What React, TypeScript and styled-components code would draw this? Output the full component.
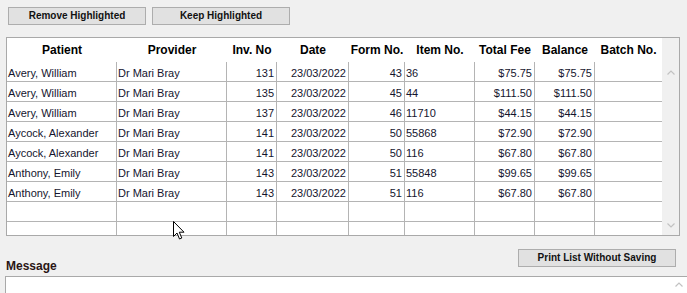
import React from 'react';
import styled, { createGlobalStyle } from 'styled-components';

const GlobalStyle = createGlobalStyle`
  html, body {
    margin: 0;
    padding: 0;
    background: #f0f0f0;
    overflow: hidden;
  }
  body {
    font-family: "Liberation Sans", Arial, sans-serif;
    color: #111;
  }
`;

type Align = 'left' | 'right';

const columns: { title: string; width: number; align: Align }[] = [
  { title: 'Patient', width: 110, align: 'left' },
  { title: 'Provider', width: 110, align: 'left' },
  { title: 'Inv. No', width: 50, align: 'right' },
  { title: 'Date', width: 72, align: 'right' },
  { title: 'Form No.', width: 56, align: 'right' },
  { title: 'Item No.', width: 70, align: 'left' },
  { title: 'Total Fee', width: 60, align: 'right' },
  { title: 'Balance', width: 60, align: 'right' },
  { title: 'Batch No.', width: 67, align: 'left' },
];

const rows: string[][] = [
  ['Avery, William', 'Dr Mari Bray', '131', '23/03/2022', '43', '36', '$75.75', '$75.75', ''],
  ['Avery, William', 'Dr Mari Bray', '135', '23/03/2022', '45', '44', '$111.50', '$111.50', ''],
  ['Avery, William', 'Dr Mari Bray', '137', '23/03/2022', '46', '11710', '$44.15', '$44.15', ''],
  ['Aycock, Alexander', 'Dr Mari Bray', '141', '23/03/2022', '50', '55868', '$72.90', '$72.90', ''],
  ['Aycock, Alexander', 'Dr Mari Bray', '141', '23/03/2022', '50', '116', '$67.80', '$67.80', ''],
  ['Anthony, Emily', 'Dr Mari Bray', '143', '23/03/2022', '51', '55848', '$99.65', '$99.65', ''],
  ['Anthony, Emily', 'Dr Mari Bray', '143', '23/03/2022', '51', '116', '$67.80', '$67.80', ''],
  ['', '', '', '', '', '', '', '', ''],
  ['', '', '', '', '', '', '', '', ''],
  ['', '', '', '', '', '', '', '', ''],
];

const gridTemplate = columns.map((c) => `${c.width}px`).join(' ');

const Page = styled.div`
  position: relative;
  width: 687px;
  height: 293px;
  overflow: hidden;
`;

const Toolbar = styled.div`
  display: flex;
  gap: 6px;
  padding: 7px 0 0 8px;
`;

const Button = styled.button<{ $width: number }>`
  width: ${(p) => p.$width}px;
  height: 18px;
  padding: 0;
  margin: 0;
  background: #e1e1e1;
  border: 1px solid #adadad;
  border-radius: 0;
  font-family: "Liberation Sans", Arial, sans-serif;
  font-size: 10px;
  font-weight: bold;
  color: #111;
  line-height: 16px;
  text-align: center;
`;

const GridBox = styled.div`
  display: flex;
  margin: 12px 0 0 6px;
  width: 674px;
  height: 199px;
  box-sizing: border-box;
  border: 1px solid #a9a9a9;
  background: #fff;
  overflow: hidden;
`;

const Grid = styled.div`
  width: 655px;
  flex: none;
  overflow: hidden;
`;

const HeaderRow = styled.div`
  display: grid;
  grid-template-columns: ${gridTemplate};
  height: 24px;
`;

const HeaderCell = styled.div`
  font-size: 12px;
  font-weight: bold;
  color: #000;
  text-align: center;
  line-height: 24px;
  white-space: nowrap;
`;

const Row = styled.div`
  display: grid;
  grid-template-columns: ${gridTemplate};
  height: 20px;
`;

const Cell = styled.div<{ $align: Align; $last: boolean }>`
  box-sizing: border-box;
  height: 20px;
  border-bottom: 1px solid #b4b4b4;
  border-right: ${(p) => (p.$last ? 'none' : '1px solid #b4b4b4')};
  padding: ${(p) => (p.$align === 'right' ? '3px 2px 0 0' : '3px 0 0 1px')};
  text-align: ${(p) => p.$align};
  font-size: 11px;
  line-height: 16px;
  white-space: nowrap;
  overflow: hidden;
  color: #15152e;
`;

const ScrollBar = styled.div`
  flex: 1;
  background: #f0f0f0;
  display: flex;
  flex-direction: column;
  align-items: center;
  justify-content: space-between;
  padding: 32px 0 7px;
`;

const BottomBar = styled.div`
  display: flex;
  justify-content: space-between;
  align-items: flex-start;
  height: 27px;
  margin-top: 13px;
  padding: 0 11px 0 6px;
`;

const Label = styled.div`
  margin-top: 10px;
  font-size: 12px;
  font-weight: bold;
  line-height: 14px;
  color: #2a1515;
`;

const MessageBox = styled.div`
  margin: 0 0 0 5px;
  width: 690px;
  height: 40px;
  box-sizing: border-box;
  border: 1px solid #a9a9a9;
  background: #fff;
  display: flex;
  justify-content: flex-end;
  padding: 5px 11px 0 0;
`;

const Cursor = styled.svg`
  position: absolute;
  left: 173px;
  top: 221px;
`;

const Chevron = ({ up }: { up: boolean }) => (
  <svg width="8" height="5" viewBox="0 0 8 5">
    <path
      d={up ? 'M0.5 4.5 L4 1 L7.5 4.5' : 'M0.5 0.5 L4 4 L7.5 0.5'}
      fill="none"
      stroke="#c2c2c2"
      strokeWidth="1.2"
    />
  </svg>
);

export default function App() {
  return (
    <Page>
      <GlobalStyle />
      <Toolbar>
        <Button $width={138}>Remove Highlighted</Button>
        <Button $width={138}>Keep Highlighted</Button>
      </Toolbar>
      <GridBox>
        <Grid>
          <HeaderRow>
            {columns.map((c) => (
              <HeaderCell key={c.title}>{c.title}</HeaderCell>
            ))}
          </HeaderRow>
          {rows.map((r, i) => (
            <Row key={i}>
              {r.map((v, j) => (
                <Cell key={j} $align={columns[j].align} $last={j === columns.length - 1}>
                  {v}
                </Cell>
              ))}
            </Row>
          ))}
        </Grid>
        <ScrollBar>
          <Chevron up />
          <Chevron up={false} />
        </ScrollBar>
      </GridBox>
      <BottomBar>
        <Label>Message</Label>
        <Button $width={158}>Print List Without Saving</Button>
      </BottomBar>
      <MessageBox>
        <Chevron up />
      </MessageBox>
      <Cursor width="13" height="20" viewBox="0 0 13 20">
        <path
          d="M0.5 0.5 L0.5 15.5 L4 12 L6.5 18 L8.8 17 L6.3 11.2 L11 11.2 Z"
          fill="#fff"
          stroke="#000"
          strokeWidth="1"
          strokeLinejoin="miter"
        />
      </Cursor>
    </Page>
  );
}
